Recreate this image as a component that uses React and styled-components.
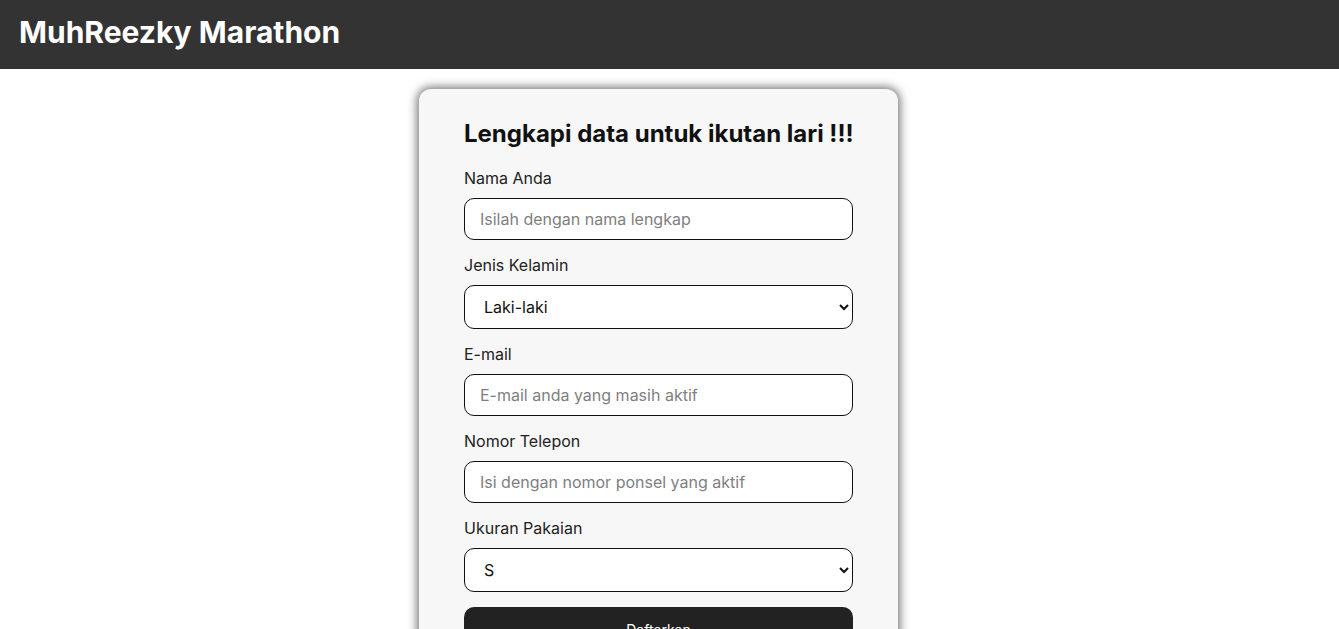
import React from "react";
import styled, { createGlobalStyle } from "styled-components";

const Global = createGlobalStyle`
  html, body { margin: 0; padding: 0; background: #ffffff; }
  body { font-family: Inter, "Noto Sans", sans-serif; color: #111; }
  ::-webkit-scrollbar { width: 6px; }
  ::-webkit-scrollbar-track { background: #f0f0f0; }
  ::-webkit-scrollbar-thumb { background: #c1c1c1; border-left: 2px solid #f0f0f0; border-right: 1px solid #f0f0f0; }
  * { box-sizing: border-box; }
`;

const Header = styled.header`
  height: 69px;
  background: #333333;
  display: flex;
  align-items: center;
  padding: 0 0 6px 19px;
`;

const Brand = styled.h1`
  margin: 0;
  color: #ffffff;
  font-size: 30px;
  font-weight: 700;
  letter-spacing: 0;
`;

const Main = styled.main`
  display: flex;
  justify-content: center;
  padding: 20px 22px 60px 0;
`;

const Card = styled.div`
  width: 479px;
  background: #f7f7f7;
  border-radius: 12px;
  box-shadow: 0 0 10px 2px rgba(0, 0, 0, 0.55);
  padding: 30px 45px 40px;
`;

const Title = styled.h2`
  margin: 0 0 19px;
  font-size: 24px;
  font-weight: 700;
  line-height: 30px;
  color: #111;
  white-space: nowrap;
`;

const Form = styled.form`
  display: flex;
  flex-direction: column;
`;

const Field = styled.div`
  display: flex;
  flex-direction: column;
  gap: 10px;
  margin-bottom: 15px;
`;

const Label = styled.label`
  font-size: 16px;
  line-height: 20px;
  color: #222;
`;

const Input = styled.input`
  height: 42px;
  width: 100%;
  border: 1px solid #111;
  border-radius: 10px;
  background: #fff;
  padding: 0 15px;
  font-family: Inter, "Noto Sans", sans-serif;
  font-size: 16px;
  color: #111;
  outline: none;
  &::placeholder { color: #808080; }
`;

const Select = styled.select`
  height: 44px;
  width: 100%;
  border: 1px solid #111;
  border-radius: 10px;
  background: #fff;
  padding: 0 15px;
  font-family: Inter, "Noto Sans", sans-serif;
  font-size: 16px;
  color: #111;
  outline: none;
`;

const Button = styled.button`
  height: 44px;
  width: 100%;
  border: none;
  border-radius: 10px;
  background: #222222;
  color: #fff;
  font-family: Inter, "Noto Sans", sans-serif;
  font-size: 14px;
  cursor: pointer;
`;

const fields = [
  { label: "Nama Anda", placeholder: "Isilah dengan nama lengkap" },
  { label: "Jenis Kelamin", options: ["Laki-laki", "Perempuan"] },
  { label: "E-mail", placeholder: "E-mail anda yang masih aktif" },
  { label: "Nomor Telepon", placeholder: "Isi dengan nomor ponsel yang aktif" },
  { label: "Ukuran Pakaian", options: ["S", "M", "L", "XL"] },
];

export default function App() {
  return (
    <>
      <Global />
      <Header>
        <Brand>MuhReezky Marathon</Brand>
      </Header>
      <Main>
        <Card>
          <Title>Lengkapi data untuk ikutan lari !!!</Title>
          <Form onSubmit={(e) => e.preventDefault()}>
            {fields.map((f) => (
              <Field key={f.label}>
                <Label>{f.label}</Label>
                {f.options ? (
                  <Select defaultValue={f.options[0]}>
                    {f.options.map((o) => (
                      <option key={o}>{o}</option>
                    ))}
                  </Select>
                ) : (
                  <Input placeholder={f.placeholder} />
                )}
              </Field>
            ))}
            <Button type="submit">Daftarkan</Button>
          </Form>
        </Card>
      </Main>
    </>
  );
}
